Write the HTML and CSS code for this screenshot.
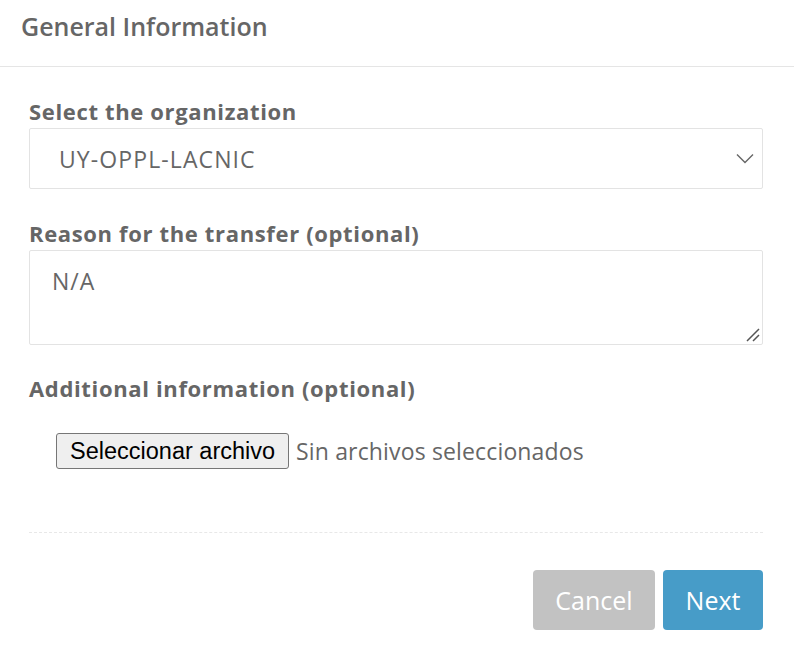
FILE: index.html
```html
<!DOCTYPE html>
<html>
<head>
<meta charset="utf-8">
<link rel="stylesheet" href="styles.css">
</head>
<body>
<div class="modal">
  <div class="modal-header">
    <h2 class="title">General Information</h2>
  </div>
  <div class="modal-body">
    <div class="field">
      <label class="label">Select the organization</label>
      <div class="select">
        <span class="select-value">UY-OPPL-LACNIC</span>
        <svg class="chevron" width="18" height="11" viewBox="0 0 18 11"><path d="M1 1.5 L9 9.5 L17 1.5" fill="none" stroke="#666" stroke-width="1.4"/></svg>
      </div>
    </div>
    <div class="field">
      <label class="label">Reason for the transfer (optional)</label>
      <div class="textarea">
        <span class="textarea-value">N/A</span>
        <svg class="grip" width="14" height="14" viewBox="0 0 14 14"><path d="M13 1 L1 13 M13 7 L7 13" stroke="#555" stroke-width="1.5" fill="none"/></svg>
      </div>
    </div>
    <div class="field">
      <label class="label">Additional information (optional)</label>
      <div class="file-row">
        <button class="file-btn" type="button">Seleccionar archivo</button>
        <span class="file-status">Sin archivos seleccionados</span>
      </div>
    </div>
    <div class="divider"></div>
    <div class="actions">
      <button class="btn btn-cancel" type="button">Cancel</button>
      <button class="btn btn-next" type="button">Next</button>
    </div>
  </div>
</div>
</body>
</html>
```
FILE: styles.css
```css
html, body {
  margin: 0;
  padding: 0;
  background: #ffffff;
}
body {
  font-family: "Open Sans", "Liberation Sans", sans-serif;
  color: #666666;
  width: 794px;
  height: 670px;
  overflow: hidden;
}
.modal-header {
  height: 67px;
  border-bottom: 1px solid #e5e5e5;
  box-sizing: border-box;
  padding: 8px 21px 0;
}
.title {
  margin: 0;
  font-size: 25px;
  font-weight: 600;
  line-height: 36px;
  color: #666666;
}
.modal-body {
  padding: 28px 31px 0 29px;
}
.field {
  display: flex;
  flex-direction: column;
}
.label {
  font-size: 22px;
  font-weight: 700;
  letter-spacing: 0.65px;
  line-height: 32px;
  margin-bottom: 1px;
  color: #666666;
}
.select {
  height: 61px;
  border: 1px solid #e3e3e3;
  box-sizing: border-box;
  border-radius: 2px;
  display: flex;
  align-items: center;
  justify-content: space-between;
  padding: 0 8px 0 29px;
  margin-bottom: 28px;
}
.select-value {
  font-size: 23px;
  letter-spacing: 1.1px;
  color: #666666;
}
.textarea {
  height: 95px;
  border: 1px solid #e3e3e3;
  box-sizing: border-box;
  border-radius: 2px;
  position: relative;
  padding: 14px 22px;
  margin-bottom: 27px;
}
.textarea-value {
  font-size: 23px;
  letter-spacing: 1px;
  line-height: 32px;
  color: #666666;
}
.grip {
  position: absolute;
  right: 2px;
  bottom: 2px;
}
.file-row {
  display: flex;
  align-items: center;
  gap: 7px;
  padding: 28px 0 0 27px;
}
.file-btn {
  font-family: "Liberation Sans", Arial, sans-serif;
  font-size: 23.5px;
  color: #000000;
  background: #efefef;
  border: 1px solid #767676;
  border-radius: 3px;
  height: 36px;
  padding: 0 13px;
}
.file-status {
  font-size: 23px;
  letter-spacing: 0.15px;
  color: #666666;
}
.divider {
  margin-top: 63px;
  border-top: 1px dashed #e8e8e8;
}
.actions {
  display: flex;
  justify-content: flex-end;
  gap: 8px;
  margin-top: 37px;
}
.btn {
  font-family: "Open Sans", "Liberation Sans", sans-serif;
  font-size: 25px;
  color: #ffffff;
  border: none;
  border-radius: 4px;
  height: 60px;
}
.btn-cancel {
  background: #c2c2c2;
  width: 122px;
}
.btn-next {
  background: #479cc8;
  width: 100px;
}
```
